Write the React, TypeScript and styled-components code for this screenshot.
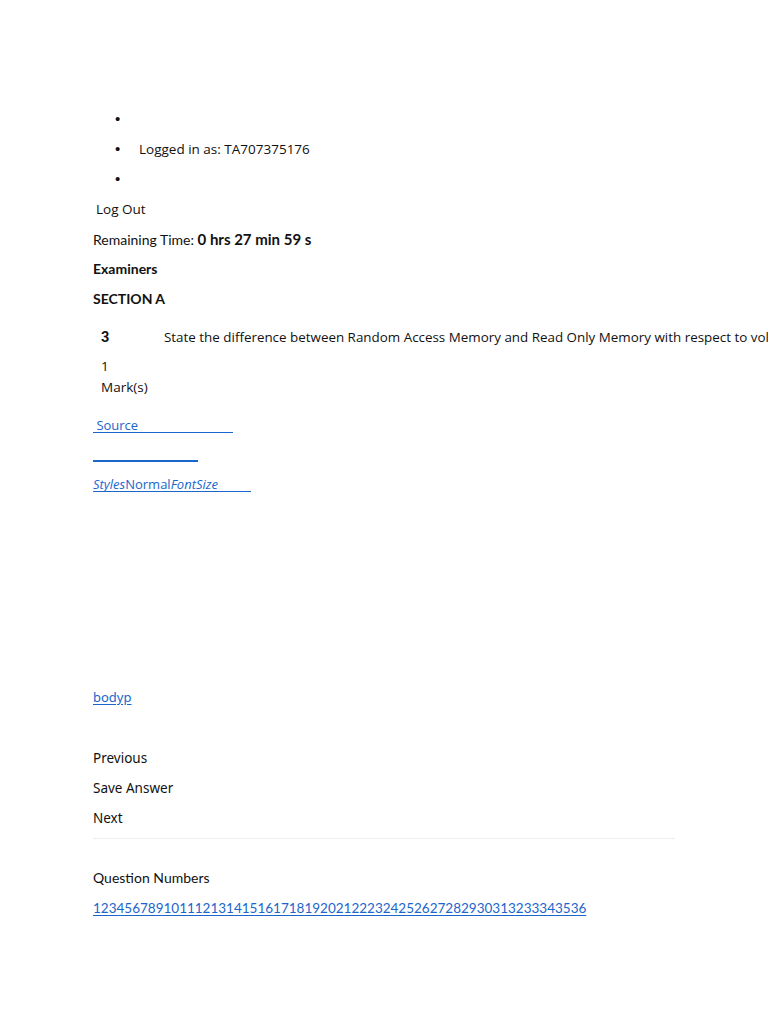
import React from "react";
import styled, { createGlobalStyle } from "styled-components";

const Global = createGlobalStyle`
  html, body { margin: 0; padding: 0; background: #fff; overflow-x: hidden; }
  body { font-family: "Open Sans", sans-serif; color: #111; }
`;

const Page = styled.div`
  padding: 104px 0 0 93px;
  box-sizing: border-box;
  white-space: nowrap;
`;

const TopList = styled.ul`
  margin: 0;
  padding-left: 22px;
  list-style: none;
`;

const Item = styled.li`
  height: 30px;
  line-height: 30px;
  font-size: 13.5px;
  font-family: "Open Sans", sans-serif;
  &::before {
    content: "•";
    display: inline-block;
    width: 24px;
    font-family: "Liberation Sans", sans-serif;
    font-size: 15px;
  }
`;

const Line = styled.div<{ $h?: number; $font?: string; $size?: number; $indent?: number; $bold?: boolean }>`
  height: ${(p) => p.$h ?? 30}px;
  line-height: ${(p) => p.$h ?? 30}px;
  font-family: ${(p) => p.$font ?? '"Open Sans", sans-serif'};
  font-size: ${(p) => p.$size ?? 13.5}px;
  font-weight: ${(p) => (p.$bold ? 700 : 400)};
  padding-left: ${(p) => p.$indent ?? 0}px;
`;

const Strong = styled.span`
  font-weight: 700;
  font-size: 15px;
`;

const QuestionRow = styled.div`
  display: flex;
  align-items: center;
  height: 30px;
  margin-top: 8px;
  padding-left: 8px;
`;

const QNum = styled.span`
  font-family: Roboto, sans-serif;
  font-weight: 700;
  font-size: 14.5px;
  width: 63px;
  flex: none;
`;

const QText = styled.span`
  font-family: "Open Sans", sans-serif;
  font-size: 13.4px;
`;

const Marks = styled.div`
  padding-left: 8px;
  font-family: "Open Sans", sans-serif;
  font-size: 13.5px;
  line-height: 21px;
  margin-top: 4px;
`;

const Link = styled.a<{ $font?: string; $size?: number }>`
  color: #1a66cc;
  text-decoration: underline;
  text-underline-offset: 2px;
  font-family: ${(p) => p.$font ?? '"Open Sans", sans-serif'};
  font-size: ${(p) => p.$size ?? 13}px;
`;

const BarLink = styled.a<{ $w: number }>`
  display: inline-block;
  vertical-align: middle;
  width: ${(p) => p.$w}px;
  color: #1a66cc;
  text-decoration: none;
  border-bottom: 1.5px solid #1a66cc;
  line-height: 14px;
  font-family: "Open Sans", sans-serif;
  font-size: 13px;
  white-space: pre;
`;

const Rule = styled.div`
  width: 105px;
  height: 1.5px;
  background: #1a66cc;
`;

const Em = styled.i``;

const Spacer = styled.div<{ $h: number }>`
  height: ${(p) => p.$h}px;
`;

const Nav = styled.div`
  font-family: "Noto Sans", sans-serif;
  font-size: 13.5px;
  height: 30px;
  line-height: 30px;
`;

const Hr = styled.div`
  width: 582px;
  height: 1px;
  background: #eee;
`;

export default function App() {
  return (
    <>
      <Global />
      <Page>
        <TopList>
          <Item></Item>
          <Item>Logged in as: TA707375176</Item>
          <Item></Item>
        </TopList>
        <Line $indent={3}>Log Out</Line>
        <Line $font='Lato, sans-serif' $size={14}>
          Remaining Time: <Strong>0 hrs 27 min 59 s</Strong>
        </Line>
        <Line $font='Lato, sans-serif' $size={14} $bold>Examiners</Line>
        <Line $font='Lato, sans-serif' $size={14} $bold>SECTION A</Line>
        <QuestionRow>
          <QNum>3</QNum>
          <QText>State the difference between Random Access Memory and Read Only Memory with respect to volatility.</QText>
        </QuestionRow>
        <Marks>1<br />Mark(s)</Marks>
        <Spacer $h={15} />
        <Line $h={22}>
          <BarLink $w={140} href="#"> Source</BarLink>
        </Line>
        <Spacer $h={25} />
        <Rule />
        <Spacer $h={11} />
        <Line $h={22}>
          <BarLink $w={158} href="#"><Em>Styles</Em>Normal<Em>FontSize</Em></BarLink>
        </Line>
        <Spacer $h={191} />
        <Line $h={22}>
          <Link $font='"Noto Sans", sans-serif' href="#">bodyp</Link>
        </Line>
        <Spacer $h={35} />
        <Nav>Previous</Nav>
        <Nav>Save Answer</Nav>
        <Nav>Next</Nav>
        <Spacer $h={5} />
        <Hr />
        <Spacer $h={24} />
        <Line $font='Lato, sans-serif' $size={14}>Question Numbers</Line>
        <Line $font='Lato, sans-serif' $size={14}>
          <Link $font='Lato, sans-serif' $size={13.5} href="#">123456789101112131415161718192021222324252627282930313233343536</Link>
        </Line>
      </Page>
    </>
  );
}
